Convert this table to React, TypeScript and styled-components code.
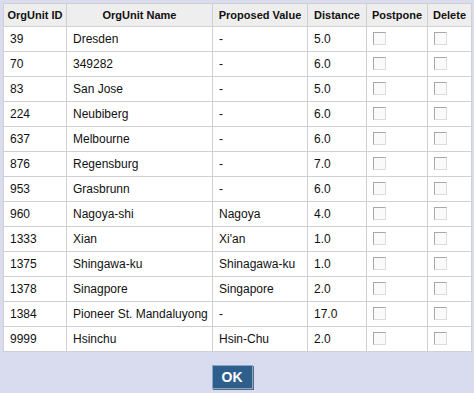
import React from "react";
import styled, { createGlobalStyle } from "styled-components";

const Global = createGlobalStyle`
  html, body { margin: 0; padding: 0; background: #d9dcee; }
  body { font-family: "Liberation Sans", Arial, sans-serif; }
`;

const Page = styled.div`
  width: 474px;
  height: 393px;
  background: #d9dcee;
  padding: 3px 3px 0 3px;
  box-sizing: border-box;
  display: flex;
  flex-direction: column;
  align-items: flex-start;
`;

const Table = styled.table`
  border-collapse: collapse;
  table-layout: fixed;
  width: 468px;
  background: #ffffff;
  font-size: 12px;
  color: #111;
`;

const Col = styled.col<{ $w: number }>`
  width: ${(p) => p.$w}px;
`;

const Th = styled.th`
  height: 22px;
  padding: 0;
  background: #eeeeee;
  border: 1px solid #d0d0d0;
  font-weight: bold;
  font-size: 11px;
  text-align: center;
  color: #111;
  white-space: nowrap;
`;

const Td = styled.td`
  height: 24px;
  padding: 0 0 0 6px;
  border: 1px solid #d0d0d0;
  white-space: nowrap;
  overflow: hidden;
`;

const Box = styled.span`
  display: inline-block;
  width: 11px;
  height: 11px;
  margin-top: 0px;
  margin-bottom: 2px;
  border: 1px solid #a8a8a8;
  border-right-color: #dcdcdc;
  border-bottom-color: #dcdcdc;
  background: #fafafa;
  vertical-align: middle;
`;

const Footer = styled.div`
  align-self: stretch;
  display: flex;
  justify-content: center;
  padding-top: 13px;
  padding-right: 10px;
`;

const OkButton = styled.button`
  width: 41px;
  height: 24px;
  background: #2e5e8c;
  color: #ffffff;
  font-family: "Liberation Sans", Arial, sans-serif;
  font-weight: bold;
  font-size: 14px;
  border: 1px solid #8aa6c4;
  box-shadow: 1px 1px 0 #5c6c80;
  padding: 0;
  cursor: pointer;
`;

const rows: [string, string, string, string][] = [
  ["39", "Dresden", "-", "5.0"],
  ["70", "349282", "-", "6.0"],
  ["83", "San Jose", "-", "5.0"],
  ["224", "Neubiberg", "-", "6.0"],
  ["637", "Melbourne", "-", "6.0"],
  ["876", "Regensburg", "-", "7.0"],
  ["953", "Grasbrunn", "-", "6.0"],
  ["960", "Nagoya-shi", "Nagoya", "4.0"],
  ["1333", "Xian", "Xi'an", "1.0"],
  ["1375", "Shingawa-ku", "Shinagawa-ku", "1.0"],
  ["1378", "Sinagpore", "Singapore", "2.0"],
  ["1384", "Pioneer St. Mandaluyong", "-", "17.0"],
  ["9999", "Hsinchu", "Hsin-Chu", "2.0"],
];

export default function App() {
  return (
    <Page>
      <Global />
      <Table>
        <colgroup>
          <Col $w={63} />
          <Col $w={146} />
          <Col $w={95} />
          <Col $w={59} />
          <Col $w={61} />
          <Col $w={44} />
        </colgroup>
        <thead>
          <tr>
            <Th>OrgUnit ID</Th>
            <Th>OrgUnit Name</Th>
            <Th>Proposed Value</Th>
            <Th>Distance</Th>
            <Th>Postpone</Th>
            <Th>Delete</Th>
          </tr>
        </thead>
        <tbody>
          {rows.map((r) => (
            <tr key={r[0]}>
              <Td>{r[0]}</Td>
              <Td>{r[1]}</Td>
              <Td>{r[2]}</Td>
              <Td>{r[3]}</Td>
              <Td>
                <Box />
              </Td>
              <Td>
                <Box />
              </Td>
            </tr>
          ))}
        </tbody>
      </Table>
      <Footer>
        <OkButton>OK</OkButton>
      </Footer>
    </Page>
  );
}
